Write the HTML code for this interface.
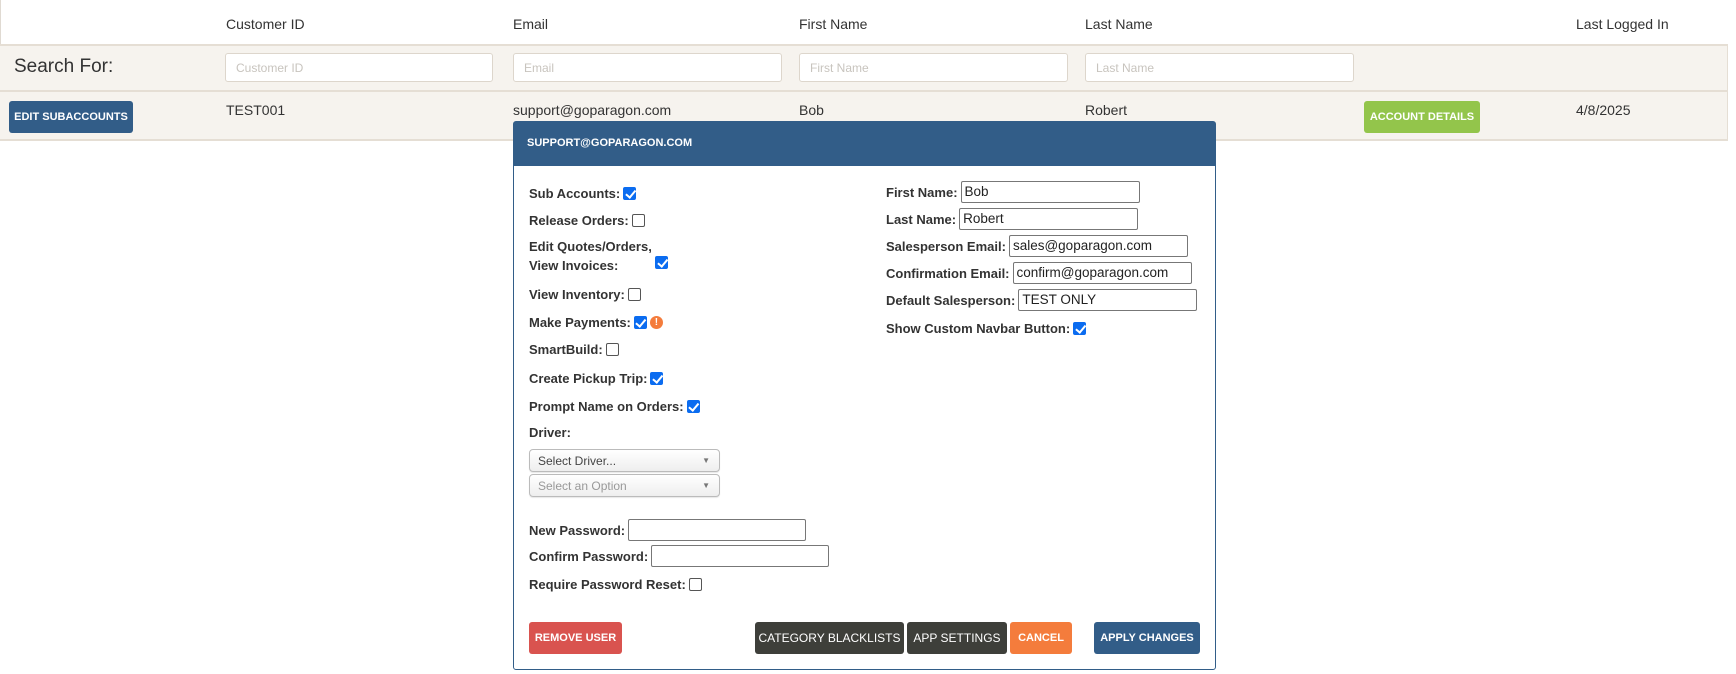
<!DOCTYPE html>
<html><head><meta charset="utf-8"><style>
*{box-sizing:border-box;margin:0;padding:0}
body{width:1736px;height:674px;background:#fff;font-family:"Liberation Sans",Arial,sans-serif;color:#333;position:relative;overflow:hidden}
.a{position:absolute}
.h{font-size:14px;color:#333;top:16px}
.inp{position:absolute;top:53px;height:29px;background:#fff;border:1px solid #ddd6cc;border-radius:3px;font-size:12px;color:#c8c4be;padding:7px 10px}
.btn{position:absolute;color:#fff;font-weight:bold;font-size:11px;text-align:center;border-radius:3px;display:flex;align-items:center;justify-content:center}
.lbl{position:absolute;font-weight:bold;font-size:13px;color:#333;white-space:nowrap;display:flex;align-items:center;height:20px}
.cb{display:inline-block;width:13px;height:13px;border:1px solid #555;border-radius:2px;background:#fff;margin-left:3px;vertical-align:middle}
.cb.on{background:#0b6cf0;border-color:#0b6cf0;position:relative}
.cb.on:after{content:"";position:absolute;left:3.5px;top:0.5px;width:3.5px;height:7.5px;border:solid #fff;border-width:0 2px 2px 0;transform:rotate(40deg)}
.ti{display:inline-block;height:22px;border:1px solid #777;border-radius:2px;margin-left:3px;font-weight:normal;font-size:13.5px;padding:2px 3px;color:#222;background:#fff}
.sel{position:absolute;left:529px;width:191px;height:23px;border:1px solid #bbb;border-radius:4px;background:linear-gradient(#fff,#eee);font-size:12px;padding:4px 8px;box-shadow:0 1px 1px rgba(0,0,0,.1)}
.sel:after{content:"▼";position:absolute;right:9px;top:6px;font-size:8px;color:#777}
</style></head><body>
<div class="a" style="left:0;top:0;width:1px;height:141px;background:#e0dad2"></div>
<div class="a h" style="left:226px">Customer ID</div>
<div class="a h" style="left:513px">Email</div>
<div class="a h" style="left:799px">First Name</div>
<div class="a h" style="left:1085px">Last Name</div>
<div class="a h" style="left:1576px">Last Logged In</div>
<div class="a" style="left:0;top:44px;width:1728px;height:97px;background:#f6f3ee;border-top:2px solid #e5ded4;border-bottom:2px solid #e5ded4;border-right:1px solid #e5ded4"></div>
<div class="a" style="left:0;top:90px;width:1728px;height:2px;background:#e5ded4"></div>
<div class="a" style="left:14px;top:56px;font-size:19px;color:#333">Search For:</div>
<div class="inp" style="left:225px;width:268px">Customer ID</div>
<div class="inp" style="left:513px;width:269px">Email</div>
<div class="inp" style="left:799px;width:269px">First Name</div>
<div class="inp" style="left:1085px;width:269px">Last Name</div>
<div class="btn" style="left:9px;top:101px;width:124px;height:32px;background:#325d88">EDIT SUBACCOUNTS</div>
<div class="a" style="left:226px;top:102px;font-size:14px">TEST001</div>
<div class="a" style="left:513px;top:102px;font-size:14px">support@goparagon.com</div>
<div class="a" style="left:799px;top:102px;font-size:14px">Bob</div>
<div class="a" style="left:1085px;top:102px;font-size:14px">Robert</div>
<div class="btn" style="left:1364px;top:101px;width:116px;height:32px;background:#93c54b">ACCOUNT DETAILS</div>
<div class="a" style="left:1576px;top:102px;font-size:14px">4/8/2025</div>

<div class="a" style="left:513px;top:121px;width:703px;height:549px;background:#fff;border:1px solid #325d88;border-radius:3px">
<div style="height:44px;background:#325d88;color:#fff;font-weight:bold;font-size:11px;padding:15px 0 0 13px">SUPPORT@GOPARAGON.COM</div>
</div>
<div class="lbl" style="left:529px;top:183px">Sub Accounts:<span class="cb on"></span></div>
<div class="lbl" style="left:529px;top:210px">Release Orders:<span class="cb"></span></div>
<div class="lbl" style="left:529px;top:236px">Edit Quotes/Orders,</div>
<div class="lbl" style="left:529px;top:255px">View Invoices:<span class="cb on" style="margin-left:37px;margin-top:-6px"></span></div>
<div class="lbl" style="left:529px;top:284px">View Inventory:<span class="cb"></span></div>
<div class="lbl" style="left:529px;top:312px">Make Payments:<span class="cb on"></span><span style="display:inline-block;width:13px;height:13px;border-radius:50%;background:#f47c3c;color:#fff;font-size:10px;text-align:center;line-height:13px;margin-left:3px">!</span></div>
<div class="lbl" style="left:529px;top:339px">SmartBuild:<span class="cb"></span></div>
<div class="lbl" style="left:529px;top:368px">Create Pickup Trip:<span class="cb on"></span></div>
<div class="lbl" style="left:529px;top:396px">Prompt Name on Orders:<span class="cb on"></span></div>
<div class="lbl" style="left:529px;top:422px">Driver:</div>
<div class="sel" style="top:449px;color:#444">Select Driver...</div>
<div class="sel" style="top:474px;color:#999">Select an Option</div>
<div class="lbl" style="left:529px;top:520px">New Password:<span class="ti" style="width:178px"></span></div>
<div class="lbl" style="left:529px;top:546px">Confirm Password:<span class="ti" style="width:178px"></span></div>
<div class="lbl" style="left:529px;top:574px">Require Password Reset:<span class="cb"></span></div>

<div class="lbl" style="left:886px;top:182px">First Name:<span class="ti" style="width:179px">Bob</span></div>
<div class="lbl" style="left:886px;top:209px">Last Name:<span class="ti" style="width:179px">Robert</span></div>
<div class="lbl" style="left:886px;top:236px">Salesperson Email:<span class="ti" style="width:179px">sales@goparagon.com</span></div>
<div class="lbl" style="left:886px;top:263px">Confirmation Email:<span class="ti" style="width:179px">confirm@goparagon.com</span></div>
<div class="lbl" style="left:886px;top:290px">Default Salesperson:<span class="ti" style="width:179px">TEST ONLY</span></div>
<div class="lbl" style="left:886px;top:318px">Show Custom Navbar Button:<span class="cb on"></span></div>

<div class="btn" style="left:529px;top:622px;width:93px;height:32px;background:#d9534f">REMOVE USER</div>
<div class="btn" style="left:755px;top:622px;width:149px;height:32px;background:#3e3f3a;font-weight:normal;font-size:12px">CATEGORY BLACKLISTS</div>
<div class="btn" style="left:907px;top:622px;width:100px;height:32px;background:#3e3f3a;font-weight:normal;font-size:12px">APP SETTINGS</div>
<div class="btn" style="left:1010px;top:622px;width:62px;height:32px;background:#f47c3c">CANCEL</div>
<div class="btn" style="left:1094px;top:622px;width:106px;height:32px;background:#325d88">APPLY CHANGES</div>
</body></html>
